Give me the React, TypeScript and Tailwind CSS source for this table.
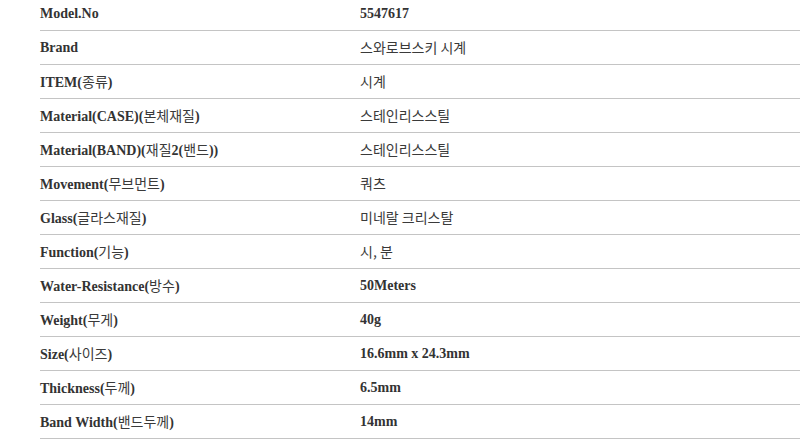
import React from "react";

const rows: [string, string][] = [
  ["Model.No", "5547617"],
  ["Brand", "스와로브스키 시계"],
  ["ITEM(종류)", "시계"],
  ["Material(CASE)(본체재질)", "스테인리스스틸"],
  ["Material(BAND)(재질2(밴드))", "스테인리스스틸"],
  ["Movement(무브먼트)", "쿼츠"],
  ["Glass(글라스재질)", "미네랄 크리스탈"],
  ["Function(기능)", "시, 분"],
  ["Water-Resistance(방수)", "50Meters"],
  ["Weight(무게)", "40g"],
  ["Size(사이즈)", "16.6mm x 24.3mm"],
  ["Thickness(두께)", "6.5mm"],
  ["Band Width(밴드두께)", "14mm"],
];

function Mixed({ text }: { text: string }) {
  const parts = text.split(/([\uAC00-\uD7A3\u3131-\u318E]+(?:[ ,]+[\uAC00-\uD7A3]+)*)/);
  return (
    <>
      {parts.map((p, i) =>
        /[\uAC00-\uD7A3]/.test(p) ? (
          <span
            key={i}
            className="font-normal text-[#3a3a3a] [font-family:'Noto_Sans_CJK_KR',sans-serif]"
          >
            {p}
          </span>
        ) : (
          <span key={i}>{p}</span>
        )
      )}
    </>
  );
}

export default function App() {
  return (
    <div className="w-[800px] h-[439px] overflow-hidden bg-white">
      <div className="mt-[-3px] pl-[40px] [font-family:'Liberation_Serif','Times_New_Roman',serif] text-[14px] font-bold text-[#333333]">
        {rows.map(([k, v]) => (
          <div
            key={k}
            className="flex h-[34px] items-center border-b border-[#c4c4c4] leading-[16px]"
          >
            <div className="w-[320px] whitespace-nowrap">
              <Mixed text={k} />
            </div>
            <div className="whitespace-nowrap">
              <Mixed text={v} />
            </div>
          </div>
        ))}
      </div>
    </div>
  );
}
